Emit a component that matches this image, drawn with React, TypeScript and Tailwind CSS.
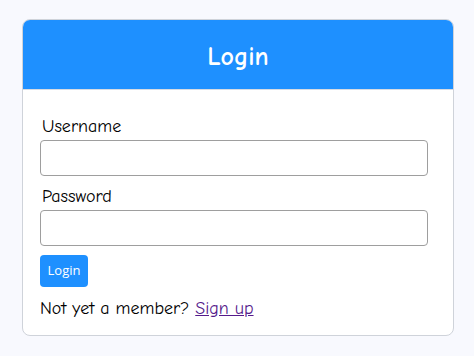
export default function App() {
  return (
    <div
      className="min-h-[356px] w-full bg-[#f8f9fe] pt-[19px] pb-[20px]"
      style={{ fontFamily: '"Comic Sans MS", "Comic Neue", "Noto Sans", sans-serif' }}
    >
      <div className="ml-[22px] w-[432px] overflow-hidden rounded-[8px] border border-[#cfd3da] bg-white">
        <div className="flex h-[70px] items-center justify-center border-b border-[#d6dbe3] bg-[#1e90ff] pt-[5px]">
          <h1 className="text-[26px] font-extrabold text-white">Login</h1>
        </div>
        <form className="px-[17px] pt-[24px] pb-[15px]" onSubmit={(e) => e.preventDefault()}>
          <label className="ml-[2px] block text-[18px] leading-[26px] text-black">Username</label>
          <input
            type="text"
            className="block h-[36px] w-[388px] rounded-[4px] border border-[#9e9e9e] bg-white px-2 outline-none"
          />
          <label className="mt-[8px] ml-[2px] block text-[18px] leading-[26px] text-black">Password</label>
          <input
            type="password"
            className="block h-[36px] w-[388px] rounded-[4px] border border-[#9e9e9e] bg-white px-2 outline-none"
          />
          <button
            type="submit"
            className="mt-[9px] h-[32px] w-[48px] rounded-[4px] bg-[#1e90ff] text-[13px] text-white"
            style={{ fontFamily: '"Open Sans", "Noto Sans", sans-serif' }}
          >
            Login
          </button>
          <p className="mt-[11px] text-[18px] leading-[22px] text-black">
            Not yet a member?{" "}
            <a href="#" className="text-[#551a8b] underline">
              Sign up
            </a>
          </p>
        </form>
      </div>
    </div>
  );
}
